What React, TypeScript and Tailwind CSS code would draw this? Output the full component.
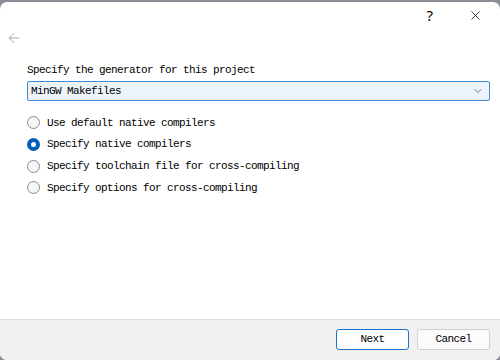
import React, { useState } from 'react';
import { ArrowLeft, X, ChevronDown } from 'lucide-react';

const mono = { fontFamily: '"Liberation Mono", "DejaVu Sans Mono", monospace' };

const options = [
  'Use default native compilers',
  'Specify native compilers',
  'Specify toolchain file for cross-compiling',
  'Specify options for cross-compiling',
];

function Radio({ checked }: { checked: boolean }) {
  if (checked) {
    return (
      <span className="flex h-[13px] w-[13px] items-center justify-center rounded-full bg-[#005fb8]">
        <span className="h-[5px] w-[5px] rounded-full bg-white" />
      </span>
    );
  }
  return <span className="h-[13px] w-[13px] rounded-full border border-[#8a8a8a] bg-[#f6f6f6]" />;
}

function App() {
  const [selected, setSelected] = useState(1);

  return (
    <div className="h-[360px] w-[500px] overflow-hidden bg-[#8b9097] pt-[2px]">
      <div className="flex h-[358px] flex-col rounded-t-[7px] rounded-b-[7px] bg-white text-black">
        <div className="flex h-[26px] items-center justify-end pr-[17px]">
          <span
            className="mr-[35px] text-[15px] leading-none"
            style={{ fontFamily: '"Noto Sans", "Liberation Sans", sans-serif' }}
          >
            ?
          </span>
          <X className="h-[15px] w-[15px]" strokeWidth={1.2} />
        </div>

        <div className="flex h-[20px] items-center pl-[6px]">
          <ArrowLeft className="h-[16px] w-[16px] text-[#a8a8a8]" strokeWidth={1.5} />
        </div>

        <div className="pl-[27px] pr-[10px] pt-[15px]" style={mono}>
          <div className="h-[14px] text-[11px] leading-[14px] tracking-[-0.6px]">
            Specify the generator for this project
          </div>
          <div className="mt-[4px] flex h-[20px] items-center justify-between rounded-[2px] border border-[#3d8ad6] bg-[#ecf3fa] pl-[3px] pr-[5px]">
            <span className="text-[11px] tracking-[-0.6px]">MinGW Makefiles</span>
            <ChevronDown className="h-[12px] w-[12px] text-[#505050]" strokeWidth={1.5} />
          </div>

          <div className="mt-[11px] flex flex-col">
            {options.map((o, i) => (
              <label
                key={o}
                className="flex h-[21.7px] cursor-default items-center gap-[7px]"
                onClick={() => setSelected(i)}
              >
                <Radio checked={selected === i} />
                <span className="text-[11px] tracking-[-0.6px]">{o}</span>
              </label>
            ))}
          </div>
        </div>

        <div className="mt-auto flex h-[41px] items-center justify-end gap-[8px] rounded-b-[7px] border-t border-[#dcdcdc] bg-[#f0f0f0] pb-[1px] pr-[10px]" style={mono}>
          <button className="h-[21px] w-[73px] rounded-[3px] border border-[#1a73cc] bg-white text-[11px] tracking-[-0.6px]">
            Next
          </button>
          <button className="h-[21px] w-[73px] rounded-[3px] border border-[#d0d0d0] bg-[#fbfbfb] text-[11px] tracking-[-0.6px]">
            Cancel
          </button>
        </div>
      </div>
    </div>
  );
}

export default App;
